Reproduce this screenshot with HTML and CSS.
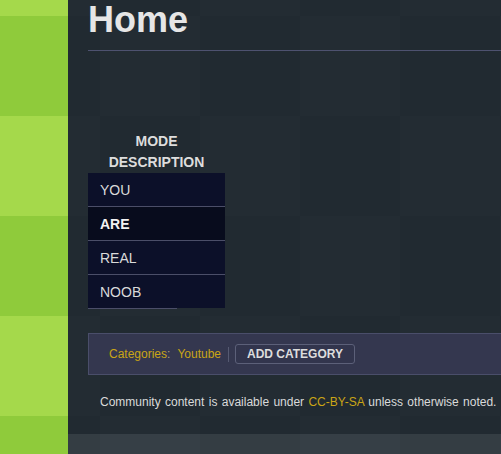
FILE: index.html
```html
<!DOCTYPE html>
<html lang="en">
<head>
<meta charset="utf-8">
<title>Home</title>
<link rel="stylesheet" href="styles.css">
</head>
<body>
<div class="page">
  <aside class="rail"></aside>
  <div class="main">
    <div class="content">
      <h1 class="title">Home</h1>
      <div class="mode">
        <div class="mode-caption">MODE<br>DESCRIPTION</div>
        <ul class="mode-list">
          <li>YOU</li>
          <li class="active">ARE</li>
          <li>REAL</li>
          <li>NOOB</li>
        </ul>
        <div class="mode-foot"></div>
      </div>
      <div class="categories">
        <span class="cat-label">Categories<span class="colon">:</span></span>
        <a class="cat-link" href="#">Youtube</a>
        <span class="cat-sep"></span>
        <button class="cat-add" type="button">ADD CATEGORY</button>
      </div>
      <p class="license">Community content is available under <a href="#">CC-BY-SA</a> unless otherwise noted.</p>
    </div>
    <footer class="bottom"></footer>
  </div>
</div>
</body>
</html>
```
FILE: styles.css
```css
* { box-sizing: border-box; }
html, body { margin: 0; padding: 0; height: 100%; }
body {
  font-family: "Liberation Sans", Arial, sans-serif;
  color: #dcdcdc;
  background: #222b32;
}
.page {
  display: flex;
  height: 100vh;
  overflow: hidden;
}
.rail {
  flex: 0 0 68px;
  background-image: linear-gradient(to bottom, #8fcb3b 0 100px, #a5d94b 100px 200px);
  background-size: 100% 200px;
  background-repeat: repeat;
  background-position: 0 16px;
  background-attachment: fixed;
}
.main {
  flex: 1;
  display: flex;
  flex-direction: column;
  min-width: 0;
  overflow: hidden;
  background-color: #232c33;
  background-image: repeating-conic-gradient(transparent 0 25%, rgba(0, 0, 0, 0.045) 0 50%);
  background-size: 200px 200px;
  background-position: 0 16px;
  background-attachment: fixed;
}
.content {
  flex: 1;
  padding-left: 20px;
}
.title {
  margin: 0;
  padding-bottom: 10px;
  font-size: 36px;
  line-height: 40px;
  font-weight: bold;
  color: #e6e6e6;
  border-bottom: 1px solid #4e5270;
}
.mode {
  margin-top: 80px;
  width: 137px;
}
.mode-caption {
  text-align: center;
  font-size: 14px;
  line-height: 21px;
  font-weight: bold;
  color: #dddddd;
}
.mode-list {
  list-style: none;
  margin: 0;
  padding: 0;
}
.mode-list li {
  height: 33px;
  display: flex;
  align-items: center;
  padding-left: 12px;
  font-size: 14px;
  color: #dadada;
  background: #0c1029;
}
.mode-list li + li { border-top: 1px solid #4b4e68; height: 34px; }
.mode-list li.active {
  background: #080c1d;
  font-weight: bold;
  color: #f2f2f2;
}
.mode-foot {
  width: 89px;
  height: 1px;
  background: #4b4e68;
}
.categories {
  margin-top: 24px;
  margin-right: -10px;
  height: 42px;
  display: flex;
  align-items: center;
  padding-left: 20px;
  background: #34374f;
  border: 1px solid #4a4e6a;
  font-size: 12px;
}
.cat-label { color: #c9a516; }
.cat-label .colon { color: #b0a47a; }
.cat-link {
  margin-left: 7px;
  color: #c9a516;
  text-decoration: none;
}
.cat-sep {
  width: 1px;
  height: 15px;
  margin: 0 6px 0 7px;
  background: #565a72;
}
.cat-add {
  height: 20px;
  padding: 0 11px;
  border: 1px solid #5c6079;
  border-radius: 3px;
  background: #32354d;
  color: #dddddd;
  font-family: inherit;
  font-size: 12px;
  font-weight: bold;
  line-height: 18px;
}
.license {
  margin: 18px 0 0;
  padding-left: 12px;
  font-size: 12px;
  line-height: 18px;
  word-spacing: 1px;
  color: #dadada;
  white-space: nowrap;
}
.license a { color: #c9a516; text-decoration: none; }
.bottom {
  flex: 0 0 20px;
  background-color: #363f46;
  background-image: repeating-conic-gradient(transparent 0 25%, rgba(0, 0, 0, 0.04) 0 50%);
  background-size: 200px 200px;
  background-position: 0 16px;
  background-attachment: fixed;
}
```
